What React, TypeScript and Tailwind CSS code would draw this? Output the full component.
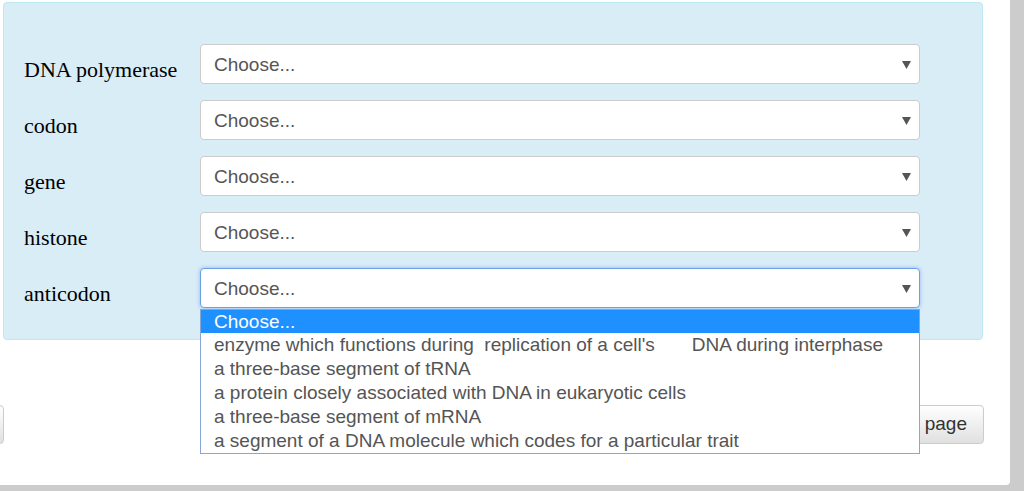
const terms = ['DNA polymerase', 'codon', 'gene', 'histone', 'anticodon'];

const options = [
  "enzyme which functions during  replication of a cell's       DNA during interphase",
  'a three-base segment of tRNA',
  'a protein closely associated with DNA in eukaryotic cells',
  'a three-base segment of mRNA',
  'a segment of a DNA molecule which codes for a particular trait',
];

function Arrow() {
  return (
    <svg width="9" height="9" viewBox="0 0 9 9" className="text-[#555]">
      <path d="M0 1h9L4.5 9z" fill="currentColor" />
    </svg>
  );
}

function FakeSelect({ open }: { open?: boolean }) {
  return (
    <div className="relative w-[720px]">
      <div
        className={
          open
            ? 'flex h-[40px] items-center justify-between rounded-[4px] border border-[#6aa0e6] bg-white pl-[13px] pr-[8px] shadow-[0_0_4px_rgba(102,150,233,0.6)]'
            : 'flex h-[40px] items-center justify-between rounded-[4px] border border-[#ccc] bg-white pl-[13px] pr-[8px]'
        }
      >
        <span className="text-[19px] leading-none text-[#555]">Choose...</span>
        <Arrow />
      </div>
      {open && (
        <ul className="absolute left-0 top-[41px] z-10 w-[720px] border border-[#86a8d8] bg-white text-[19px] leading-[24px] text-[#555]">
          <li className="h-[23px] bg-[#1e90ff] pl-[13px] leading-[23px] text-white">Choose...</li>
          {options.map((o) => (
            <li key={o} className="h-[24px] whitespace-pre pl-[13px]">
              {o}
            </li>
          ))}
        </ul>
      )}
    </div>
  );
}

export default function App() {
  return (
    <div className="h-[491px] w-[1024px] overflow-hidden bg-[#cccccc] font-['Liberation_Sans',Arial,sans-serif]">
      <div className="h-[485px] w-[1010px] overflow-hidden rounded-br-[4px] bg-white pt-[2px]">
        {/* panel */}
        <div className="ml-[3px] flex h-[338px] w-[980px] flex-col gap-[16px] rounded-[4px] border border-[#bce8f1] bg-[#d9edf7] pt-[41px]">
          {terms.map((t, i) => (
            <div key={t} className="flex h-[40px] items-start">
              <div className="h-[40px] w-[196px] pl-[20px] pt-[11px] font-['Liberation_Serif','Times_New_Roman',serif] text-[22px] leading-[29px] text-black">
                {t}
              </div>
              <FakeSelect open={i === terms.length - 1} />
            </div>
          ))}
        </div>

        {/* nav buttons */}
        <div className="mt-[65px] flex w-[984px] justify-between">
          <button className="-ml-[96px] h-[39px] w-[100px] rounded-[4px] border border-[#ccc] bg-gradient-to-b from-white to-[#e0e0e0]" />
          <button className="h-[39px] rounded-[4px] border border-[#ccc] bg-gradient-to-b from-white to-[#e0e0e0] px-[16px] text-[19px] text-[#333]">
            Next page
          </button>
        </div>
      </div>
    </div>
  );
}
